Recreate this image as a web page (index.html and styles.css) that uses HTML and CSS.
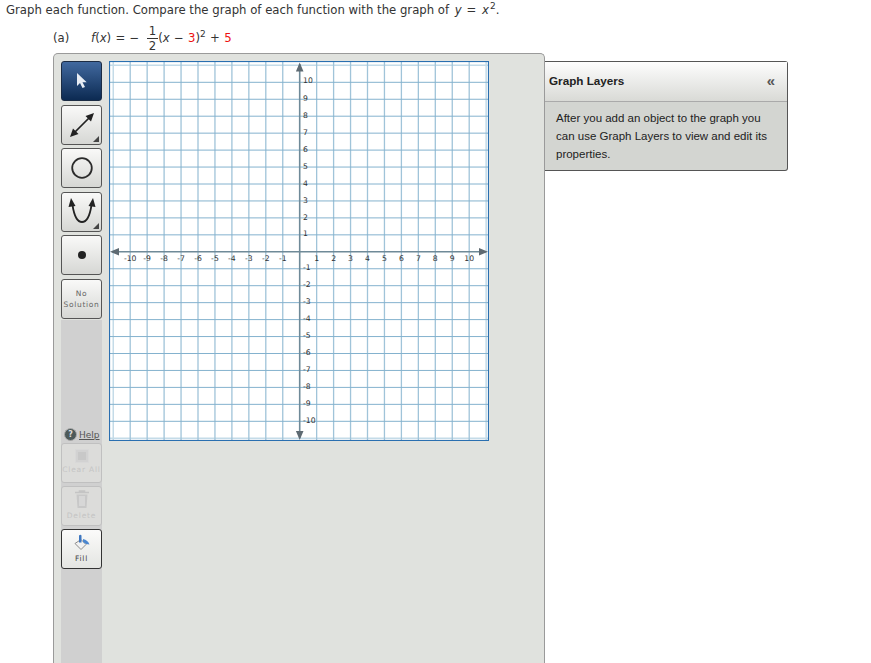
FILE: index.html
```html
<!DOCTYPE html>
<html lang="en">
<head>
<meta charset="utf-8">
<title>Graph each function</title>
<link rel="stylesheet" href="styles.css">
</head>
<body>
<p class="prompt">Graph each function. Compare the graph of each function with the graph of <i class="var">y</i> = <i class="var">x</i><sup>2</sup>.</p>
<div class="equation">
  <span class="part">(a)</span>
  <span class="math"><i>f</i>(<i>x</i>) = &minus; <span class="frac"><span class="num">1</span><span class="den">2</span></span>(<i>x</i> &minus; <span class="red">3</span>)<sup>2</sup> + <span class="red">5</span></span>
</div>
<div class="workspace">
  <div class="tool-panel">
    <div class="toolbar">
      <div class="tools">
        <button class="tool active" aria-label="Select">
          <svg width="14" height="18" viewBox="0 0 14 18"><path d="M2 1v13l3-3 2.500 5 2.500-1-2.500-4.800h4.200z" fill="#e8edf4"/></svg>
        </button>
        <button class="tool" aria-label="Line">
          <svg width="26" height="26" viewBox="0 0 26 26"><path d="M6 20 20 6" stroke="#222" stroke-width="1.700"/><path d="M1 25l3-8.500 5.500 5.500zM25 1l-3 8.500-5.500-5.500z" fill="#222"/></svg>
          <span class="corner"></span>
        </button>
        <button class="tool" aria-label="Circle">
          <svg width="24" height="24" viewBox="0 0 24 24"><circle cx="12" cy="12" r="9.800" fill="none" stroke="#2b2b2b" stroke-width="1.800"/></svg>
        </button>
        <button class="tool" aria-label="Parabola">
          <svg width="30" height="30" viewBox="0 0 30 30"><path d="M5.500 8C7 18 10 25 15 25S23 18 24.500 8" fill="none" stroke="#222" stroke-width="1.800"/><path d="M4 1l-2.500 9 7-1zM26 1l2.500 9-7-1z" fill="#222"/></svg>
          <span class="corner"></span>
        </button>
        <button class="tool" aria-label="Point"><span class="dot"></span></button>
        <button class="tool label-tool">No<br>Solution</button>
      </div>
      <div class="rail">
        <a class="help"><span class="help-icon">?</span><span class="help-text">Help</span></a>
        <button class="tool disabled">
          <span class="clear-icon"></span>
          <span class="tool-label">Clear All</span>
        </button>
        <button class="tool disabled">
          <svg width="16" height="18" viewBox="0 0 16 18"><path d="M1 2.500h14M5.500 2.500V1h5v1.500" fill="none" stroke="#c4c4c4" stroke-width="1.500"/><path d="M2.500 4.500h11L12.500 18h-9z" fill="#c8c8c8"/><path d="M6 6v10M8 6v10M10 6v10" stroke="#e6e6e6"/></svg>
          <span class="tool-label">Delete</span>
        </button>
        <button class="tool fill-tool">
          <svg width="16" height="16" viewBox="0 0 16 16"><path d="M1 9.500l6-4 5 5-5 5z" fill="#f2f2f2" stroke="#8a8a8a" stroke-width="1"/><path d="M5 1.500q1.500-1.500 2.500 0V8.500h-2.500z" fill="#3f77c0"/><path d="M9 5q5 1 6.500 5.500-3.500 0-6.500-2.500z" fill="#4a86cf"/></svg>
          <span class="tool-label">Fill</span>
        </button>
      </div>
    </div>
    <svg class="graph" width="380" height="380" viewBox="0 0 380 380">
      <rect x="0.500" y="0.500" width="379" height="379" fill="#fff"/>
      <g fill="none" stroke="#c4dbe8" stroke-width="1.500">
        <path d="M4.250 1V379M377.150 1V379M1 4.350H379M1 377.250H379"/>
      </g>
      <g fill="none">
        <path stroke="#a0c4d9" stroke-width="1.300" d="M21.200 1V379M38.150 1V379M55.100 1V379M72.050 1V379M89 1V379M105.950 1V379M122.900 1V379M139.850 1V379M156.800 1V379M173.750 1V379M207.650 1V379M224.600 1V379M241.550 1V379M258.500 1V379M275.450 1V379M292.400 1V379M309.350 1V379M326.300 1V379M343.250 1V379M360.200 1V379"/>
        <path stroke="#84b2ce" stroke-width="1" d="M1 21.300H379M1 38.250H379M1 55.200H379M1 72.150H379M1 89.100H379M1 106.050H379M1 123H379M1 139.950H379M1 156.900H379M1 173.850H379M1 207.750H379M1 224.700H379M1 241.650H379M1 258.600H379M1 275.550H379M1 292.500H379M1 309.450H379M1 326.400H379M1 343.350H379M1 360.300H379"/>
      </g>
      <rect x="0.500" y="0.500" width="379" height="379" fill="none" stroke="#2a6fb0" stroke-width="1.200"/>
      <path d="M3 190.800H377M190.700 3V377" stroke="#6f8a98" stroke-width="1.600" fill="none"/>
      <path d="M1 190.800l9-3.800v7.600zM379 190.800l-9-3.800v7.600zM190.700 1.500l-3.800 9h7.600zM190.700 379l-3.800-9h7.600z" fill="#5e6a72"/>
      <g class="x-labels">
        <text x="21.200" y="200">-10</text><text x="38.150" y="200">-9</text><text x="55.100" y="200">-8</text><text x="72.050" y="200">-7</text><text x="89" y="200">-6</text><text x="105.950" y="200">-5</text><text x="122.900" y="200">-4</text><text x="139.850" y="200">-3</text><text x="156.800" y="200">-2</text><text x="173.750" y="200">-1</text>
        <text x="207.650" y="200">1</text><text x="224.600" y="200">2</text><text x="241.550" y="200">3</text><text x="258.500" y="200">4</text><text x="275.450" y="200">5</text><text x="292.400" y="200">6</text><text x="309.350" y="200">7</text><text x="326.300" y="200">8</text><text x="343.250" y="200">9</text><text x="360.200" y="200">10</text>
      </g>
      <g class="y-labels">
        <text x="194" y="22">10</text><text x="194" y="39.500">9</text><text x="194" y="56.500">8</text><text x="194" y="73.500">7</text><text x="194" y="90.500">6</text><text x="194" y="107.500">5</text><text x="194" y="124.500">4</text><text x="194" y="141.500">3</text><text x="194" y="158.500">2</text><text x="194" y="175">1</text>
        <text x="194" y="209">-1</text><text x="194" y="226">-2</text><text x="194" y="243">-3</text><text x="194" y="260">-4</text><text x="194" y="277">-5</text><text x="194" y="294">-6</text><text x="194" y="311">-7</text><text x="194" y="328">-8</text><text x="194" y="345">-9</text><text x="194" y="362">-10</text>
      </g>
    </svg>
  </div>
  <aside class="layers">
    <header class="layers-head"><span>Graph Layers</span><span class="collapse">&laquo;</span></header>
    <p class="layers-body">After you add an object to the graph you can use Graph Layers to view and edit its properties.</p>
  </aside>
</div>
</body>
</html>
```

FILE: styles.css
```css
* { box-sizing: border-box; }
html, body { height: 100%; }
body {
  margin: 0;
  height: 663px;
  overflow: hidden;
  display: flex;
  flex-direction: column;
  background: #fff;
  color: #333;
  font-family: "DejaVu Sans", Verdana, sans-serif;
  font-size: 11.7px;
}
sup { font-size: 9px; line-height: 0; }
.prompt { margin: 0; padding: 3px 6px 0; height: 20px; line-height: 14px; }
.var { font-style: italic; margin-left: 2px; margin-right: 1px; }
.equation {
  display: flex;
  align-items: center;
  height: 33px;
  padding: 3px 0 0 53px;
}
.part { width: 38px; }
.math { white-space: pre; word-spacing: .6px; line-height: 30px; }
.frac {
  display: inline-block;
  vertical-align: middle;
  text-align: center;
  margin: 0 0 0 3px;
}
.num { display: block; border-bottom: 1px solid #333; padding: 0 2px; line-height: 14px; }
.den { display: block; line-height: 14px; }
.red { color: #e11; }
.workspace { display: flex; align-items: flex-start; flex: 1; min-height: 0; }
.tool-panel {
  margin-left: 53px;
  width: 492px;
  height: 100%;
  display: flex;
  gap: 7px;
  padding: 7px 0 0 7px;
  background: #e0e2de;
  border: 1px solid #9a9a9a;
  border-bottom: 0;
  border-radius: 5px 5px 0 0;
}
.toolbar { width: 41px; display: flex; flex-direction: column; height: 100%; }
.tools { display: flex; flex-direction: column; gap: 3.500px; }
.tool {
  position: relative;
  width: 41px;
  height: 40px;
  padding: 0;
  border: 1px solid #555;
  border-radius: 3px;
  background: linear-gradient(#f9f9f8, #d6d7d4);
  display: flex;
  flex-direction: column;
  align-items: center;
  justify-content: center;
  font-family: "DejaVu Sans", Verdana, sans-serif;
  color: #666;
}
.tool.active { background: linear-gradient(#41699f, #0c2a52); border-color: #1c2c44; }
.corner {
  position: absolute;
  right: 2px;
  bottom: 2px;
  width: 0;
  height: 0;
  border-style: solid;
  border-width: 0 0 6px 6px;
  border-color: transparent transparent #444 transparent;
}
.dot { width: 8px; height: 8px; border-radius: 50%; background: #222; }
.label-tool { font-size: 7.500px; line-height: 11px; letter-spacing: .7px; }
.rail {
  flex: 1;
  margin-top: 1px;
  background: #d0d0d0;
  display: flex;
  flex-direction: column;
  gap: 3px;
  padding-top: 108px;
}
.help { display: flex; align-items: center; gap: 2px; height: 14px; margin: 0 0 -2px 3px; font-size: 9px; color: #555; }
.help-icon {
  width: 13px;
  height: 13px;
  border-radius: 50%;
  background: #4d5a5a;
  border: 1px solid #aaa;
  color: #ddd;
  font-size: 8px;
  line-height: 11px;
  text-align: center;
  font-weight: bold;
}
.help-text { text-decoration: underline; }
.tool.disabled { border-color: #c0c0c0; background: #dcdcda; color: #c4c4c4; }
.clear-icon { width: 12px; height: 12px; background: #c8c8c8; border: 2px solid #d2d2d2; outline: 1px solid #d8d8d8; }
.tool-label { font-size: 7.500px; letter-spacing: .8px; line-height: 10px; margin-top: 3px; }
.fill-tool { border-color: #333; background: linear-gradient(#fbfbfa, #e4e5e2); color: #444; }
.fill-tool .tool-label { margin-top: 4px; }
.graph { display: block; flex: none; }
.graph text { font-family: "DejaVu Sans", Verdana, sans-serif; font-size: 7.700px; fill: #333; }
.x-labels text { text-anchor: middle; }
.layers {
  margin-top: 8px;
  width: 243px;
  height: 110px;
  background: #d3d5d1;
  border: 1px solid #555;
  border-left: 0;
  border-radius: 0 3px 3px 0;
  font-family: "Liberation Sans", Arial, sans-serif;
  font-size: 11.500px;
  color: #222;
}
.layers-head {
  height: 40px;
  display: flex;
  align-items: center;
  justify-content: space-between;
  padding: 0 12px 2px 4px;
  background: linear-gradient(#fdfdfd, #d9dad6);
  border-bottom: 1px solid #aaa;
  font-weight: bold;
  font-size: 11.700px;
}
.collapse { font-size: 15px; font-weight: bold; color: #555; }
.layers-body { margin: 0; padding: 7px 12px 0 11px; line-height: 18px; }
```
